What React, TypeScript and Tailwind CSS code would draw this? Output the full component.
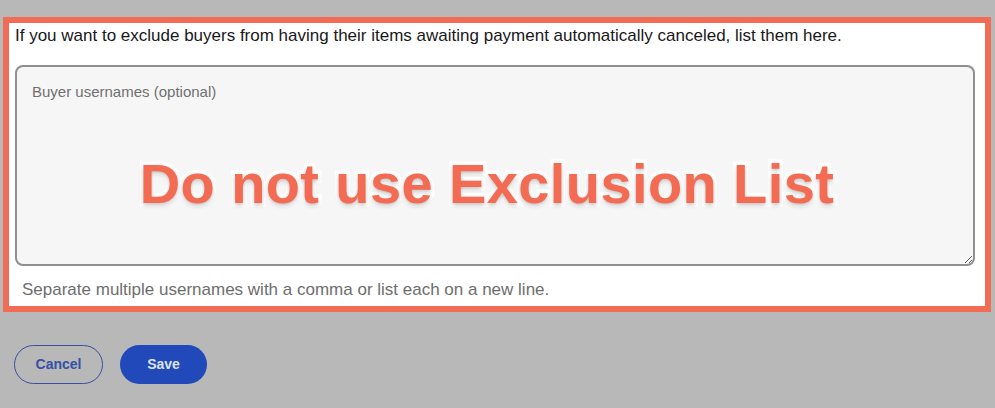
import { useState } from "react";

export default function App() {
  const [names, setNames] = useState("");

  return (
    <div className="h-[408px] w-[995px] overflow-hidden bg-[#b8b8b8] pt-[17px] font-['Liberation_Sans',Arial,sans-serif]">
      <section className="ml-[3px] w-[988px] border-[6px] border-[#f26c55] bg-white px-[6px] pb-[4px]">
        <p className="pt-[1px] text-[17px] leading-[24px] text-[#191919]">
          If you want to exclude buyers from having their items awaiting payment automatically canceled, list them here.
        </p>

        <div className="relative mt-[17px]">
          <textarea
            value={names}
            onChange={(e) => setNames(e.target.value)}
            placeholder="Buyer usernames (optional)"
            className="block h-[201px] w-[960px] rounded-[8px] border-2 border-[#8f8f8f] bg-[#f6f6f6] px-[15px] pt-[15px] text-[15px] leading-[20px] text-[#191919] placeholder:text-[#707070] focus:outline-none"
          />
          {/* annotation stamped over the field */}
          <div className="pointer-events-none absolute inset-0 flex items-center justify-center pr-[20px] pt-[36px]">
            <span className="text-[56px] font-bold leading-none tracking-[0.4px] text-[#f26b52] [paint-order:stroke_fill] [-webkit-text-stroke:7px_white] [text-shadow:0_2px_4px_rgba(0,0,0,0.25)]">
              Do not use Exclusion List
            </span>
          </div>
        </div>

        <p className="mt-[12px] pl-[7px] text-[17px] leading-[24px] text-[#6e6e6e]">
          Separate multiple usernames with a comma or list each on a new line.
        </p>
      </section>

      <div className="mt-[33px] flex gap-[17px] pl-[14px]">
        <button className="h-[39px] w-[89px] rounded-full border border-[#3b4f9e] text-[14px] font-bold text-[#3451a6]">
          Cancel
        </button>
        <button className="h-[39px] w-[87px] rounded-full bg-[#2149b9] text-[14px] font-bold text-[#dfe3ee]">
          Save
        </button>
      </div>
    </div>
  );
}
